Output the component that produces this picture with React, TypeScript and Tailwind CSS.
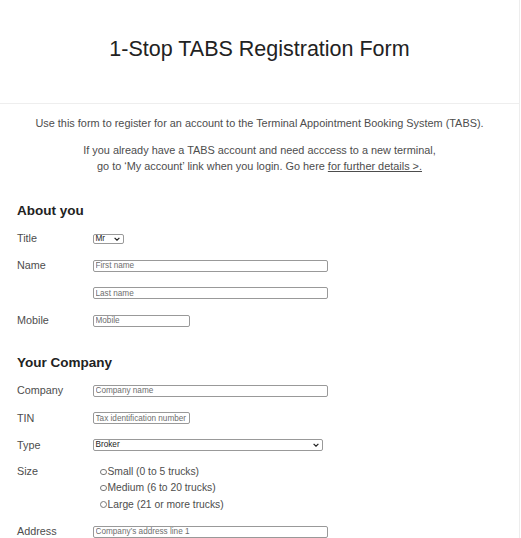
import React from "react";

const Chevron = ({ className = "" }: { className?: string }) => (
  <svg viewBox="0 0 10 6" className={className} width="6" height="4">
    <path d="M1 1 L5 5 L9 1" fill="none" stroke="#222" strokeWidth="2" />
  </svg>
);

function Row({ label, children }: { label: string; children?: React.ReactNode }) {
  return (
    <div className="flex items-center h-[27.3px]">
      <div className="w-[76px] text-[10.8px] text-[#4d4d4d] leading-[14px] -mt-[1px]">{label}</div>
      <div className="flex items-center">{children}</div>
    </div>
  );
}

function TextBox({ placeholder, w }: { placeholder: string; w: string }) {
  return (
    <input
      placeholder={placeholder}
      className={`${w} h-[12px] border border-[#999] rounded-[2px] px-[1.5px] text-[8.2px] leading-[10px] text-[#222] placeholder:text-[#6e6e6e] outline-none`}
    />
  );
}

function Radio({ label }: { label: string }) {
  return (
    <div className="flex items-center h-[16.3px]">
      <span className="w-[6.5px] h-[6.5px] rounded-full border border-[#777] mr-[1px]" />
      <span className="text-[10.3px] text-[#4d4d4d]">{label}</span>
    </div>
  );
}

export default function App() {
  return (
    <div
      className="w-[520px] min-h-[538px] bg-white border-r border-[#ededed]"
      style={{ fontFamily: '"Liberation Sans", Arial, sans-serif' }}
    >
      <div className="h-[104px] border-b border-[#eeeeee] flex items-center justify-center pb-[3px]">
        <h1 className="text-[21.5px] text-[#222] leading-none">1-Stop TABS Registration Form</h1>
      </div>

      <div className="pt-[11.5px] text-center text-[10.9px] text-[#4d4d4d] leading-[15.5px]">
        <p className="mb-[12px]">
          Use this form to register for an account to the Terminal Appointment Booking System (TABS).
        </p>
        <p>
          If you already have a TABS account and need acccess to a new terminal,
          <br />
          go to ‘My account’ link when you login. Go here{" "}
          <a className="underline">for further details &gt;.</a>
        </p>
      </div>

      <div className="px-[17px]">
        <h2 className="mt-[29px] mb-[6px] text-[13.5px] font-bold text-[#222] leading-[16px]">About you</h2>
        <Row label="Title">
          <div className="relative w-[31px] h-[10px] border border-[#999] rounded-[2px] flex items-center">
            <span className="text-[8.2px] leading-none text-[#222] pl-[1.5px]">Mr</span>
            <Chevron className="absolute right-[3px] top-[2px]" />
          </div>
        </Row>
        <Row label="Name">
          <TextBox placeholder="First name" w="w-[235px]" />
        </Row>
        <Row label="">
          <TextBox placeholder="Last name" w="w-[235px]" />
        </Row>
        <Row label="Mobile">
          <TextBox placeholder="Mobile" w="w-[97px]" />
        </Row>

        <h2 className="mt-[21px] mb-[6px] text-[13.5px] font-bold text-[#222] leading-[16px]">Your Company</h2>
        <Row label="Company">
          <TextBox placeholder="Company name" w="w-[235px]" />
        </Row>
        <Row label="TIN">
          <TextBox placeholder="Tax identification number" w="w-[97px]" />
        </Row>
        <Row label="Type">
          <div className="relative w-[230px] h-[12px] border border-[#999] rounded-[2px] flex items-center">
            <span className="text-[8.2px] leading-none text-[#222] pl-[1.5px]">Broker</span>
            <Chevron className="absolute right-[3px] top-[3px]" />
          </div>
        </Row>
        <div className="flex pt-[4.6px] pb-[5.3px]">
          <div className="w-[76px] text-[10.8px] text-[#4d4d4d] leading-[16.3px] -mt-[1px]">Size</div>
          <div className="pl-[7px]">
            <Radio label="Small (0 to 5 trucks)" />
            <Radio label="Medium (6 to 20 trucks)" />
            <Radio label="Large (21 or more trucks)" />
          </div>
        </div>
        <Row label="Address">
          <TextBox placeholder="Company’s address line 1" w="w-[235px]" />
        </Row>
      </div>
    </div>
  );
}
